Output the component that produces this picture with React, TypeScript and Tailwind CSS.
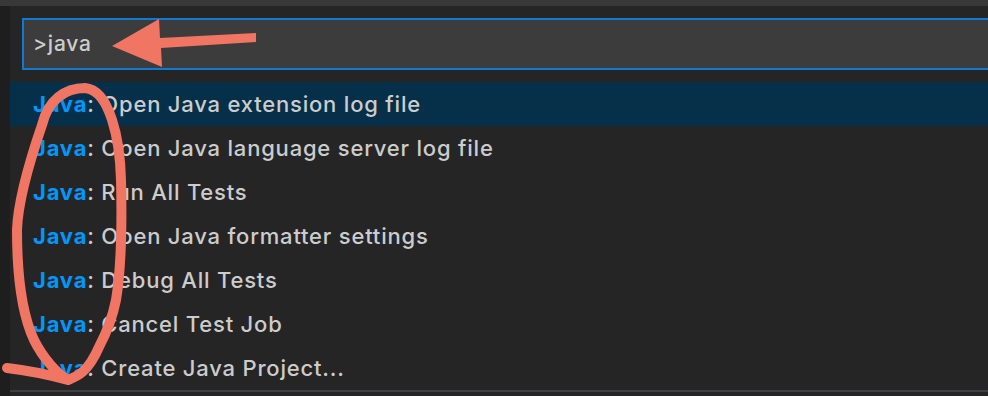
const rows = [
  'Open Java extension log file',
  'Open Java language server log file',
  'Run All Tests',
  'Open Java formatter settings',
  'Debug All Tests',
  'Cancel Test Job',
  'Create Java Project...',
]

export default function App() {
  return (
    <div className="relative w-[988px] h-[396px] overflow-hidden bg-[#1e1e1e] flex flex-col" style={{ fontFamily: 'Inter, "Noto Sans", sans-serif' }}>
      <div className="h-[6px] bg-[#383838]" />
      <div className="flex flex-1">
        <div className="w-[10px] bg-[#1e1e1e]" />
        <div className="flex-1 bg-[#252526] flex flex-col">
          <div className="mt-3 ml-3 -mr-4 h-[52px] border-2 border-[#0e7ad3] bg-[#3c3c3c] flex items-center pl-[9px]">
            <span className="text-[21px] font-medium text-[#cccccc] tracking-[0.8px]">&gt;java</span>
          </div>
          <div className="mt-3 flex flex-col">
            {rows.map((r, i) => (
              <div
                key={r}
                className={`h-[44px] flex items-center pl-[23px] text-[22px] font-medium tracking-[0.8px] text-[#cccccc] whitespace-nowrap ${i === 0 ? 'bg-[#062f4a]' : ''}`}
              >
                <span className="font-bold text-[#0097fb]">Java</span>
                <span>: {r}</span>
              </div>
            ))}
          </div>
          <div className="h-[2px] bg-[#3f3f46]" />
        </div>
      </div>

      {/* red annotation marks */}
      <svg className="absolute inset-0 pointer-events-none" width="988" height="396" viewBox="0 0 988 396">
        <polygon points="112,46 159,19 160,38 256,33 256,42 161,48 162,67" fill="#f07563" />
        <path
          d="M 7 368 Q 40 372 68 380 C 78 376 88 372 99 347 C 108 330 113 315 116 300 C 121 270 122 220 121 180 C 120 140 110 90 85 88 C 65 88 48 100 42 125 C 30 160 18 200 17 230 C 17 270 20 310 34 340 C 44 360 58 374 68 380"
          fill="none"
          stroke="#f07563"
          strokeWidth="10"
          strokeLinecap="round"
          strokeLinejoin="round"
        />
      </svg>
    </div>
  )
}
